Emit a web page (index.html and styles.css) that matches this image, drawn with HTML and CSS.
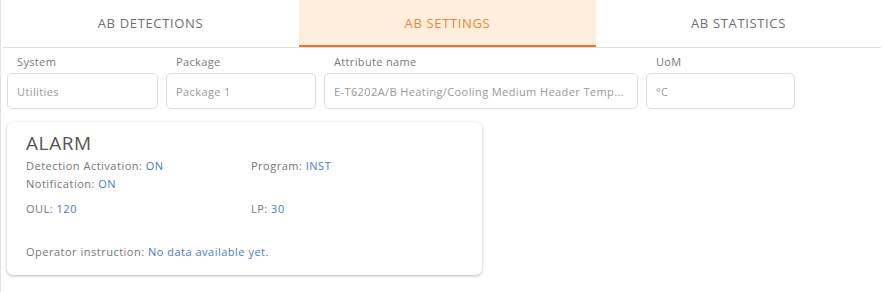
FILE: index.html
```html
<!DOCTYPE html>
<html>
<head>
<meta charset="utf-8">
<link rel="stylesheet" href="styles.css">
</head>
<body>
<div class="page">
  <div class="tabs">
    <div class="tab">AB DETECTIONS</div>
    <div class="tab active">AB SETTINGS</div>
    <div class="tab">AB STATISTICS</div>
  </div>
  <div class="fields">
    <div class="field f-system">
      <div class="label">System</div>
      <div class="input">Utilities</div>
    </div>
    <div class="field f-package">
      <div class="label">Package</div>
      <div class="input">Package 1</div>
    </div>
    <div class="field f-attr">
      <div class="label">Attribute name</div>
      <div class="input">E-T6202A/B Heating/Cooling Medium Header Temp...</div>
    </div>
    <div class="field f-uom">
      <div class="label">UoM</div>
      <div class="input">°C</div>
    </div>
  </div>
  <div class="card">
    <div class="title">ALARM</div>
    <div class="grid">
      <div class="cell"><div>Detection Activation: <span class="v">ON</span></div><div class="l2">Notification: <span class="v">ON</span></div></div>
      <div class="cell">Program: <span class="v">INST</span></div>
      <div class="cell r2">OUL: <span class="v">120</span></div>
      <div class="cell r2">LP: <span class="v">30</span></div>
    </div>
    <div class="instr">Operator instruction: <span class="v">No data available yet.</span></div>
  </div>
</div>
</body>
</html>
```
FILE: styles.css
```css
html, body {
  margin: 0;
  padding: 0;
  background: #fff;
}
body {
  font-family: "Open Sans", "Liberation Sans", sans-serif;
  color: #666;
}
.page {
  width: 881px;
  height: 292px;
  border-left: 1px solid #e2e2e2;
  padding-left: 1px;
  box-sizing: border-box;
}
.tabs {
  display: grid;
  grid-template-columns: 297px 297px 1fr;
  border-bottom: 1px solid #e0e0e0;
}
.tab {
  height: 45px;
  border-bottom: 2px solid transparent;
  display: flex;
  align-items: center;
  justify-content: center;
  font-size: 13px;
  color: #6f6f6f;
  letter-spacing: 0.65px;
}
.tab.active {
  background: #fdefdb;
  color: #f2823a;
  border-bottom-color: #f07027;
}
.fields {
  display: flex;
  gap: 8px;
  padding: 6px 0 0 5px;
}
.label {
  font-size: 11px;
  color: #7a7a7a;
  padding-left: 10px;
  height: 19px;
  line-height: 15px;
  letter-spacing: 0.35px;
}
.input {
  height: 36px;
  box-sizing: border-box;
  border: 1px solid #dedede;
  border-radius: 5px;
  font-size: 11px;
  color: #9a9a9a;
  padding-left: 9px;
  display: flex;
  align-items: center;
  white-space: nowrap;
  overflow: hidden;
  letter-spacing: 0.4px;
}
.f-system { width: 151px; }
.f-package { width: 150px; }
.f-attr { width: 314px; }
.f-uom { width: 149px; }
.card {
  margin: 13px 0 0 5px;
  width: 475px;
  height: 153px;
  box-sizing: border-box;
  border-radius: 6px;
  box-shadow: 0 1px 3px rgba(0,0,0,0.28);
  padding: 8px 20px 0 19px;
  font-size: 11px;
  color: #777;
  letter-spacing: 0.5px;
}
.title {
  font-size: 19px;
  color: #555;
  line-height: 27px;
  letter-spacing: 0.6px;
}
.grid {
  display: grid;
  grid-template-columns: 225px 1fr;
}
.cell {
  line-height: 18px;
}
.cell.r2 {
  margin-top: 7px;
}
.v {
  color: #4a7cc0;
}
.instr {
  margin-top: 25px;
  line-height: 18px;
}
```
